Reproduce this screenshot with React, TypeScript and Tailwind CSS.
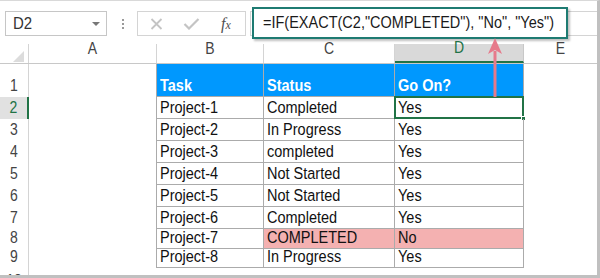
import React from 'react';

// Excel-like sheet with an annotated formula bar

interface Row {
  n: number;
  h: string;
  b: string;
  c: string;
  d: string;
  head?: boolean;
  pink?: boolean;
}

const rows: Row[] = [
  { n: 1, h: 'h-[33px]', b: 'Task', c: 'Status', d: 'Go On?', head: true },
  { n: 2, h: 'h-[22px]', b: 'Project-1', c: 'Completed', d: 'Yes' },
  { n: 3, h: 'h-[22px]', b: 'Project-2', c: 'In Progress', d: 'Yes' },
  { n: 4, h: 'h-[22px]', b: 'Project-3', c: 'completed', d: 'Yes' },
  { n: 5, h: 'h-[22px]', b: 'Project-4', c: 'Not Started', d: 'Yes' },
  { n: 6, h: 'h-[22px]', b: 'Project-5', c: 'Not Started', d: 'Yes' },
  { n: 7, h: 'h-[22px]', b: 'Project-6', c: 'Completed', d: 'Yes' },
  { n: 8, h: 'h-[20px]', b: 'Project-7', c: 'COMPLETED', d: 'No', pink: true },
  { n: 9, h: 'h-[19px]', b: 'Project-8', c: 'In Progress', d: 'Yes' },
];

// the screenshot's glyphs are a bit taller than they are wide
const tall = 'inline-block origin-bottom scale-y-[1.18]';

const Toolbar: React.FC = () => (
  <div className="relative h-[43px] flex items-start pt-[10px] pl-[5px]">
    {/* Name box */}
    <div className="w-[102px] h-[25px] border border-[#c6c6c6] flex items-center justify-between pl-[7px] pr-[6px]">
      <span className="text-[15px] text-[#333] inline-block scale-y-[1.15]">D2</span>
      <svg width="8" height="4" viewBox="0 0 8 4">
        <path d="M0 0 L8 0 L4 4 Z" fill="#777" />
      </svg>
    </div>

    {/* Grip dots */}
    <div className="ml-[15px] mt-[8px] flex flex-col gap-[2px]">
      <div className="w-[2px] h-[2px] bg-[#9a9a9a]" />
      <div className="w-[2px] h-[2px] bg-[#9a9a9a]" />
      <div className="w-[2px] h-[2px] bg-[#9a9a9a]" />
    </div>

    {/* Cancel / enter / fx */}
    <div className="ml-[13px] w-[109px] h-[25px] border border-[#d4d4d4] flex items-center pl-[12px]">
      <svg width="13" height="12" viewBox="0 0 13 12">
        <path d="M1.5 1 L11.5 11 M11.5 1 L1.5 11" stroke="#c4c4c4" strokeWidth="1.8" />
      </svg>
      <svg className="ml-[20px]" width="17" height="13" viewBox="0 0 17 13">
        <path d="M1.5 7 L6 11.5 L15.5 2" stroke="#c4c4c4" strokeWidth="2.2" fill="none" />
      </svg>
      <span className="ml-[21px] font-['Liberation_Serif',serif] italic text-[16px] text-[#505050] leading-none">
        f<span className="text-[12px]">x</span>
      </span>
    </div>

    {/* Formula bar */}
    <div className="ml-[4px] flex-1 h-[25px] border-t border-b border-l border-[#d4d4d4]" />

    {/* Highlighted formula (annotation) */}
    <div className="absolute left-[252px] top-[6px] w-[316px] h-[32px] border-2 border-[#1e7b72] bg-white shadow-[2px_2px_2px_rgba(0,0,0,0.25)] flex items-center pl-[9px]">
      <span className="text-[14.5px] text-[#1a1a1a] whitespace-nowrap inline-block scale-y-[1.18]">
        =IF(EXACT(C2,"COMPLETED"), "No", "Yes")
      </span>
    </div>
  </div>
);

const ColumnHeaders: React.FC = () => (
  <div className="flex h-[20px] border-b border-[#c8c8c8] text-[14px] text-[#444]">
    <div className="w-[29px] border-r border-[#d4d4d4] flex items-end justify-end pr-[4px] pb-[1px]">
      <svg width="11" height="11" viewBox="0 0 11 11">
        <path d="M11 0 L11 11 L0 11 Z" fill="#dcdcdc" />
      </svg>
    </div>
    <div className="w-[128px] border-r border-[#d4d4d4] flex items-end justify-center pb-[2px]">
      <span className={tall}>A</span>
    </div>
    <div className="w-[107px] border-r border-[#d4d4d4] flex items-end justify-center pb-[2px]">
      <span className={tall}>B</span>
    </div>
    <div className="w-[131px] border-r border-[#d4d4d4] flex items-end justify-center pb-[2px]">
      <span className={tall}>C</span>
    </div>
    <div className="w-[129px] bg-[#d9d9d9] border-b-2 border-b-[#217346] border-r border-r-[#c8c8c8] flex items-end justify-center pb-[1px] text-[#217346]">
      <span className={tall}>D</span>
    </div>
    <div className="flex-1 flex items-end justify-center pb-[2px]">
      <span className={tall}>E</span>
    </div>
  </div>
);

const SheetRow: React.FC<{ row: Row }> = ({ row }) => {
  const selected = row.n === 2;
  const cell = row.head ? 'bg-[#0098fe] text-white font-bold' : 'text-[#111]';
  return (
    <div className={`flex ${row.h}`}>
      <div
        className={`w-[29px] flex items-end justify-center pb-[1px] text-[14px] leading-[17px] ${
          selected ? 'bg-[#e1e1e1] border-r-2 border-[#217346] text-[#217346]' : 'border-r border-[#d4d4d4] text-[#444]'
        }`}
      >
        <span className={tall}>{row.n}</span>
      </div>
      <div className="w-[128px] border-r border-[#ababab]" />
      <div className={`w-[107px] border-r border-b border-[#ababab] flex items-end pl-[3px] leading-[17px] ${cell}`}>
        <span className={tall}>{row.b}</span>
      </div>
      <div
        className={`w-[131px] border-r border-b border-[#ababab] flex items-end pl-[3px] leading-[17px] ${cell} ${
          row.pink ? 'bg-[#f4b1b1]' : ''
        }`}
      >
        <span className={tall}>{row.c}</span>
      </div>
      <div
        className={`relative w-[129px] border-r border-b border-[#ababab] flex items-end pl-[3px] leading-[17px] ${cell} ${
          row.pink ? 'bg-[#f4b1b1]' : ''
        }`}
      >
        <span className={tall}>{row.d}</span>
        {selected && (
          <>
            <div className="absolute -left-[1px] -top-[1px] w-[130px] h-[23px] border-2 border-[#217346]" />
            <div className="absolute -right-[3px] -bottom-[3px] w-[5px] h-[5px] bg-[#217346] border border-white" />
          </>
        )}
      </div>
      <div className="flex-1" />
    </div>
  );
};

const App: React.FC = () => {
  return (
    <div className="w-[600px] h-[278px] overflow-hidden bg-white border-t border-t-[#d9d9d9] border-r-[3px] border-b-[3px] border-r-[#c0c0c0] border-b-[#c0c0c0] font-['Liberation_Sans',Arial,sans-serif] text-[14.5px]">
      <div className="relative">
        <Toolbar />
        <ColumnHeaders />
        {rows.map((r) => (
          <SheetRow key={r.n} row={r} />
        ))}
        <div className="flex h-[10px]">
          <div className="w-[29px] border-r border-[#d4d4d4] flex justify-center pt-[4px] text-[14px] text-[#444] leading-none">
            10
          </div>
        </div>

        {/* Pink annotation arrow */}
        <svg className="absolute left-[486px] top-[36px]" width="18" height="60" viewBox="0 0 18 60">
          <path d="M9 14 L9 60" stroke="#e67a8b" strokeWidth="3" />
          <path d="M9 1 L16 17 L9 13 L2 17 Z" fill="#e67a8b" />
        </svg>
      </div>
    </div>
  );
};

export default App;
